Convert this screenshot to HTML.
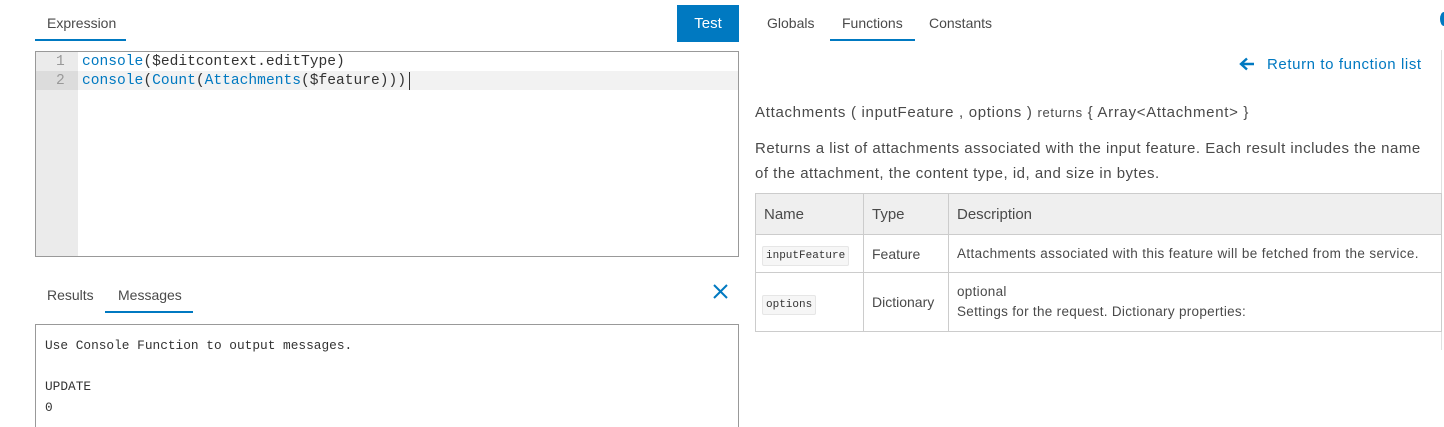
<!DOCTYPE html>
<html style="width:1444px;height:427px;overflow:hidden"><head><meta charset="utf-8"><style>
*{box-sizing:border-box;margin:0;padding:0}
body{width:1444px;height:427px;background:#fff;position:relative;overflow:hidden;font-family:"Liberation Sans",sans-serif;color:#4a4a4a}
.a{position:absolute;white-space:nowrap}
.tab{font-size:14px;color:#4a4a4a}
.ul{position:absolute;height:2px;background:#0079c1}
.mono{font-family:"Liberation Mono",monospace}
.code{font-size:14.6px;color:#333}
.k{color:#0079c1}
table{border-collapse:collapse;font-size:14px;color:#4a4a4a}
td{border:1px solid #ccc;padding:0 8px}
.c{font-family:"Liberation Mono",monospace;font-size:11px;background:#f6f6f6;border:1px solid #e6e6e6;border-radius:2px;padding:3px 3px;color:#333}
</style></head><body>
<div class="a tab" style="left:47px;top:15px">Expression</div>
<div class="ul" style="left:35px;top:39px;width:91px"></div>
<div class="a" style="left:677px;top:5px;width:62px;height:37px;background:#0079c1;color:#fff;font-size:15px;text-align:center;line-height:38px">Test</div>
<div class="a" style="left:35px;top:51px;width:704px;height:206px;border:1px solid #999"></div>
<div class="a" style="left:36px;top:52px;width:42px;height:204px;background:#ebebeb"></div>
<div class="a" style="left:36px;top:71px;width:702px;height:19px;background:#f2f2f2"></div>
<div class="a" style="left:36px;top:71px;width:42px;height:19px;background:#dcdcdc"></div>
<div class="a mono code" style="left:56px;top:54px;color:#999">1</div>
<div class="a mono code" style="left:56px;top:73px;color:#999">2</div>
<div class="a mono code" style="left:82px;top:54px"><span class="k">console</span>($editcontext.editType)</div>
<div class="a mono code" style="left:82px;top:73px"><span class="k">console</span>(<span class="k">Count</span>(<span class="k">Attachments</span>($feature)))</div>
<div class="a" style="left:409px;top:72px;width:1px;height:18px;background:#333"></div>
<div class="a tab" style="left:47px;top:287px">Results</div>
<div class="a tab" style="left:118px;top:287px">Messages</div>
<div class="ul" style="left:105px;top:311px;width:88px"></div>
<svg class="a" style="left:713px;top:284px" width="15" height="15" viewBox="0 0 15 15"><path d="M1 1L14 14M14 1L1 14" stroke="#0079c1" stroke-width="2"/></svg>
<div class="a" style="left:35px;top:324px;width:704px;height:103px;border:1px solid #999;border-bottom:none"></div>
<div class="a mono" style="left:45px;top:338px;font-size:12.8px;color:#333">Use Console Function to output messages.</div>
<div class="a mono" style="left:45px;top:379px;font-size:12.8px;color:#333">UPDATE</div>
<div class="a mono" style="left:45px;top:400px;font-size:12.8px;color:#333">0</div>
<div class="a tab" style="left:767px;top:15px">Globals</div>
<div class="a tab" style="left:842px;top:15px">Functions</div>
<div class="a tab" style="left:929px;top:15px">Constants</div>
<div class="ul" style="left:830px;top:39px;width:85px"></div>
<div class="a" style="left:1440px;top:12px;width:8px;height:14px;border-radius:50%;background:#0079c1"></div>
<div class="a" style="left:1441px;top:50px;width:1px;height:300px;background:#e0e0e0"></div>
<svg class="a" style="left:1239px;top:57px" width="16" height="14" viewBox="0 0 16 14"><path d="M15 7H3M8 1.5L2 7l6 5.5" stroke="#0079c1" stroke-width="2.4" fill="none"/></svg>
<div class="a" style="left:1267px;top:56px;font-size:15px;color:#0079c1;letter-spacing:0.6px">Return to function list</div>
<div class="a" style="left:755px;top:104px;font-size:15px;letter-spacing:0.7px">Attachments ( inputFeature , options ) <span style="font-size:13px">returns</span> { Array&lt;Attachment&gt; }</div>
<div class="a" style="left:755px;top:136px;font-size:15px;line-height:25px;letter-spacing:0.5px">Returns a list of attachments associated with the input feature. Each result includes the name<br>of the attachment, the content type, id, and size in bytes.</div>
<table class="a" style="left:755px;top:193px;width:687px">
<tr style="height:41px;background:#efefef;font-size:15px"><td style="width:108px">Name</td><td style="width:85px">Type</td><td>Description</td></tr>
<tr style="height:38px"><td style="padding:0 6px"><span class="c">inputFeature</span></td><td>Feature</td><td style="font-size:13.5px;letter-spacing:0.37px">Attachments associated with this feature will be fetched from the service.</td></tr>
<tr style="height:59px"><td style="padding:0 6px"><span class="c">options</span></td><td>Dictionary</td><td style="font-size:13.5px;line-height:20px;letter-spacing:0.3px">optional<br>Settings for the request. Dictionary properties:</td></tr>
</table>
</body></html>
